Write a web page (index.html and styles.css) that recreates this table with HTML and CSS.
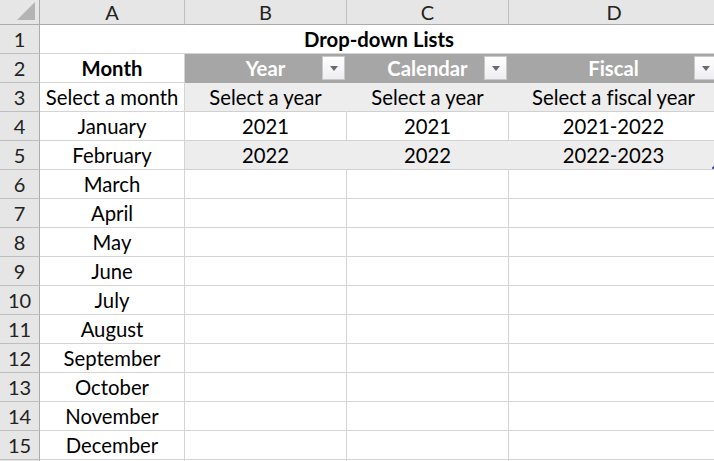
FILE: index.html
```html
<!DOCTYPE html>
<html>
<head>
<meta charset="utf-8">
<link rel="stylesheet" href="styles.css">
</head>
<body>
<div class="sheet">
  <div class="corner"><span class="tri"></span></div>
  <div class="colh">A</div>
  <div class="colh">B</div>
  <div class="colh">C</div>
  <div class="colh last">D</div>

  <div class="rowh">1</div>
  <div class="cell title">Drop-down Lists</div>

  <div class="rowh">2</div>
  <div class="cell bold">Month</div>
  <div class="cell th">Year<span class="dd"><span class="arr"></span></span></div>
  <div class="cell th">Calendar<span class="dd"><span class="arr"></span></span></div>
  <div class="cell th">Fiscal<span class="dd"><span class="arr"></span></span></div>

  <div class="rowh">3</div>
  <div class="cell">Select a month</div>
  <div class="cell band">Select a year</div>
  <div class="cell band">Select a year</div>
  <div class="cell band">Select a fiscal year</div>

  <div class="rowh">4</div>
  <div class="cell">January</div>
  <div class="cell tb">2021</div>
  <div class="cell tb">2021</div>
  <div class="cell tb">2021-2022</div>

  <div class="rowh">5</div>
  <div class="cell">February</div>
  <div class="cell band">2022</div>
  <div class="cell band">2022</div>
  <div class="cell band">2022-2023<span class="handle"></span></div>

  <div class="rowh">6</div><div class="cell">March</div><div class="cell"></div><div class="cell"></div><div class="cell"></div>
  <div class="rowh">7</div><div class="cell">April</div><div class="cell"></div><div class="cell"></div><div class="cell"></div>
  <div class="rowh">8</div><div class="cell">May</div><div class="cell"></div><div class="cell"></div><div class="cell"></div>
  <div class="rowh">9</div><div class="cell">June</div><div class="cell"></div><div class="cell"></div><div class="cell"></div>
  <div class="rowh">10</div><div class="cell">July</div><div class="cell"></div><div class="cell"></div><div class="cell"></div>
  <div class="rowh">11</div><div class="cell">August</div><div class="cell"></div><div class="cell"></div><div class="cell"></div>
  <div class="rowh">12</div><div class="cell">September</div><div class="cell"></div><div class="cell"></div><div class="cell"></div>
  <div class="rowh">13</div><div class="cell">October</div><div class="cell"></div><div class="cell"></div><div class="cell"></div>
  <div class="rowh">14</div><div class="cell">November</div><div class="cell"></div><div class="cell"></div><div class="cell"></div>
  <div class="rowh">15</div><div class="cell">December</div><div class="cell"></div><div class="cell"></div><div class="cell"></div>
  <div class="rowh"></div><div class="cell"></div><div class="cell"></div><div class="cell"></div><div class="cell"></div>
</div>
</body>
</html>
```
FILE: styles.css
```css
html, body {
  margin: 0;
  padding: 0;
  background: #ffffff;
  overflow: hidden;
}
.sheet {
  display: grid;
  grid-template-columns: 40px 145px 162px 162px 210px;
  grid-template-rows: 25px repeat(16, 29px);
  font-family: Lato, "Open Sans", sans-serif;
  font-size: 20.3px;
  font-variant-ligatures: none;
  color: #000;
}
.corner {
  background: #e6e6e6;
  border-right: 1px solid #ababab;
  border-bottom: 1px solid #ababab;
  position: relative;
}
.tri {
  position: absolute;
  right: 4px;
  bottom: 4px;
  width: 0;
  height: 0;
  border-left: 18px solid transparent;
  border-bottom: 18px solid #b4b4b4;
}
.colh {
  background: #e6e6e6;
  border-right: 1px solid #bfbfbf;
  border-bottom: 1px solid #ababab;
  display: flex;
  align-items: center;
  justify-content: center;
  color: #222;
  font-size: 20px;
}
.colh.last { border-right: none; }
.rowh {
  background: #e6e6e6;
  border-right: 1px solid #ababab;
  border-bottom: 1px solid #bfbfbf;
  display: flex;
  align-items: center;
  justify-content: center;
  color: #222;
  font-size: 20px;
}
.cell {
  border-right: 1px solid #d4d4d4;
  border-bottom: 1px solid #d4d4d4;
  display: flex;
  align-items: center;
  justify-content: center;
  white-space: nowrap;
  position: relative;
  background: #fff;
}
.title {
  grid-column: 2 / 6;
  font-weight: 700;
}
.bold { font-weight: 700; }
.th {
  background: #a6a6a6;
  color: #fff;
  font-weight: 700;
  border-right-color: #a6a6a6;
  border-bottom-color: #a6a6a6;
}
.dd {
  position: absolute;
  right: 1px;
  top: 2px;
  width: 21px;
  height: 22px;
  border: 1px solid #c9c9c9;
  background: linear-gradient(#ffffff, #eeeef2);
  display: flex;
  align-items: center;
  justify-content: center;
}
.arr {
  width: 0;
  height: 0;
  border-left: 4px solid transparent;
  border-right: 4px solid transparent;
  border-top: 5px solid #6a6a6a;
  margin-top: 1px;
}
.band {
  background: #ededed;
  border-right-color: #ededed;
  border-bottom-color: #d0d0d0;
}
.tb {
  border-bottom-color: #d0d0d0;
}
.handle {
  position: absolute;
  right: 3px;
  bottom: 0px;
  width: 3px;
  height: 3px;
  border-right: 2px solid #4a5fb0;
  border-bottom: 2px solid #4a5fb0;
  box-sizing: border-box;
}
```
